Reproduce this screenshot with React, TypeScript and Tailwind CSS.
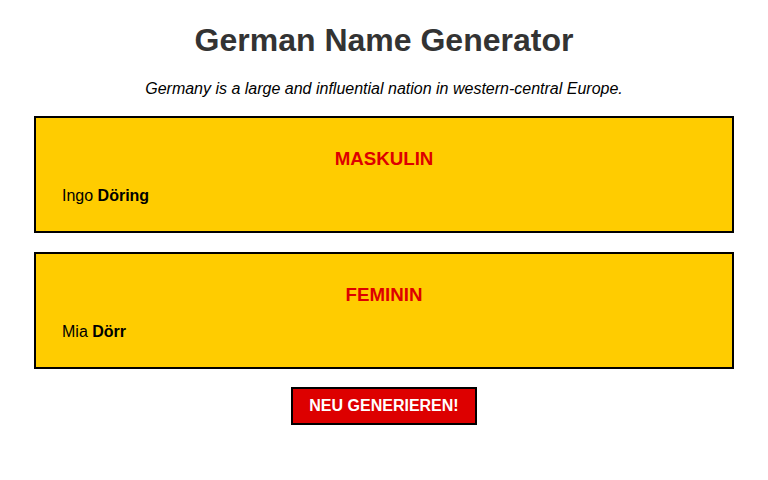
export default function App() {
  const names = [
    { label: 'MASKULIN', first: 'Ingo', last: 'Döring' },
    { label: 'FEMININ', first: 'Mia', last: 'Dörr' },
  ]

  return (
    <div className="min-h-screen bg-white px-[34px] font-['Liberation_Sans',Arial,sans-serif] text-black">
      {/* Header */}
      <h1 className="pt-[22px] text-center text-[32px] font-bold leading-[37px] text-[#333333]">
        German Name Generator
      </h1>
      <p className="mt-[21px] text-center text-base italic leading-[18px]">
        Germany is a large and influential nation in western-central Europe.
      </p>

      {/* Name boxes */}
      <div className="mt-[18px] flex flex-col gap-[19px]">
        {names.map((n) => (
          <div key={n.label} className="border-2 border-black bg-[#ffcc00] px-[26px] pt-[30px] pb-[26px]">
            <h2 className="text-center text-[18.72px] font-bold leading-[21px] text-[#dd0000]">{n.label}</h2>
            <p className="mt-[18px] text-base leading-[18px]">
              {n.first} <b>{n.last}</b>
            </p>
          </div>
        ))}
      </div>

      {/* Button */}
      <div className="mt-[18px] flex justify-center">
        <button className="h-[38px] w-[186px] border-2 border-black bg-[#dd0000] text-base font-bold text-white">
          NEU GENERIEREN!
        </button>
      </div>
    </div>
  )
}
